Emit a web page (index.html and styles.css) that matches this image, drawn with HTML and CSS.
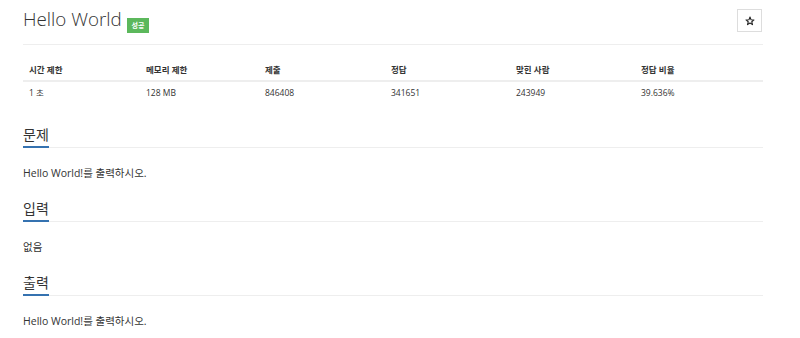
FILE: index.html
```html
<!DOCTYPE html>
<html lang="ko">
<head>
    <meta charset="UTF-8">
    <meta name="viewport" content="width=device-width, initial-scale=1.0">
    <title>Hello World</title>
    <link rel="stylesheet" href="styles.css">
</head>
<body>
    <div class="container">
        <div class="page-header">
            <h1 class="title">Hello World <span class="badge">성공</span></h1>
            <button class="star-button" type="button">
                <svg class="star-icon" viewBox="0 0 12 12" width="10" height="10">
                    <path d="M6 1.2 L7.3 4.6 L10.8 4.7 L8.1 6.9 L9 10.4 L6 8.4 L3 10.4 L3.9 6.9 L1.2 4.7 L4.7 4.6 Z"/>
                </svg>
            </button>
        </div>

        <table class="problem-info">
            <thead>
                <tr>
                    <th class="col-time">시간 제한</th>
                    <th class="col-memory">메모리 제한</th>
                    <th class="col-submit">제출</th>
                    <th class="col-accept">정답</th>
                    <th class="col-user">맞힌 사람</th>
                    <th class="col-rate">정답 비율</th>
                </tr>
            </thead>
            <tbody>
                <tr>
                    <td>1 초</td>
                    <td>128 MB</td>
                    <td>846408</td>
                    <td>341651</td>
                    <td>243949</td>
                    <td>39.636%</td>
                </tr>
            </tbody>
        </table>

        <section class="section first">
            <div class="headline"><h2>문제</h2></div>
            <p>Hello World!를 출력하시오.</p>
        </section>

        <section class="section">
            <div class="headline"><h2>입력</h2></div>
            <p>없음</p>
        </section>

        <section class="section">
            <div class="headline"><h2>출력</h2></div>
            <p>Hello World!를 출력하시오.</p>
        </section>
    </div>
</body>
</html>
```

FILE: styles.css
```css
body {
    margin: 0;
    background-color: #fff;
    font-family: 'Open Sans', 'Noto Sans CJK KR', sans-serif;
    color: #333;
}
.container {
    width: 740px;
    margin-left: 23px;
}
.page-header {
    display: flex;
    justify-content: space-between;
    align-items: center;
    padding: 8px 1px 11px 0;
    border-bottom: 1px solid #eee;
}
.title {
    margin: 0;
    font-size: 18.8px;
    font-weight: 300;
    line-height: 23px;
}
.badge {
    display: inline-block;
    margin-left: 0;
    padding: 0 5px;
    height: 15px;
    line-height: 15px;
    background-color: #5cb85c;
    color: #fff;
    font-size: 7px;
    font-weight: 600;
    vertical-align: -2px;
}
.star-button {
    display: flex;
    align-items: center;
    justify-content: center;
    width: 25px;
    height: 23px;
    padding: 0;
    background-color: #fff;
    border: 1px solid #ddd;
}
.star-icon {
    fill: none;
    stroke: #222;
    stroke-width: 1.3;
    stroke-linejoin: round;
}
.problem-info {
    width: 100%;
    margin-top: 11px;
    border-collapse: collapse;
    table-layout: fixed;
    font-size: 8.5px;
}
.problem-info th,
.problem-info td {
    text-align: left;
    line-height: 12px;
}
.problem-info th {
    padding: 8px 6px 4px;
    font-weight: 700;
    border-bottom: 2px solid #eee;
}
.problem-info td {
    padding: 5px 6px;
}
.col-time { width: 105px; }
.col-memory { width: 107px; }
.col-submit { width: 114px; }
.col-accept { width: 113px; }
.col-user { width: 113px; }
.section {
    margin-top: 20px;
}
.section.first {
    margin-top: 22px;
}
.headline {
    display: flex;
    border-bottom: 1px solid #eee;
}
.headline h2 {
    margin: 0 0 -1px;
    padding-bottom: 2px;
    font-size: 14px;
    font-weight: 400;
    line-height: 18px;
    border-bottom: 2px solid #3572b0;
}
.section p {
    margin: 18px 0 0;
    font-size: 10.5px;
    line-height: 14px;
}
```
